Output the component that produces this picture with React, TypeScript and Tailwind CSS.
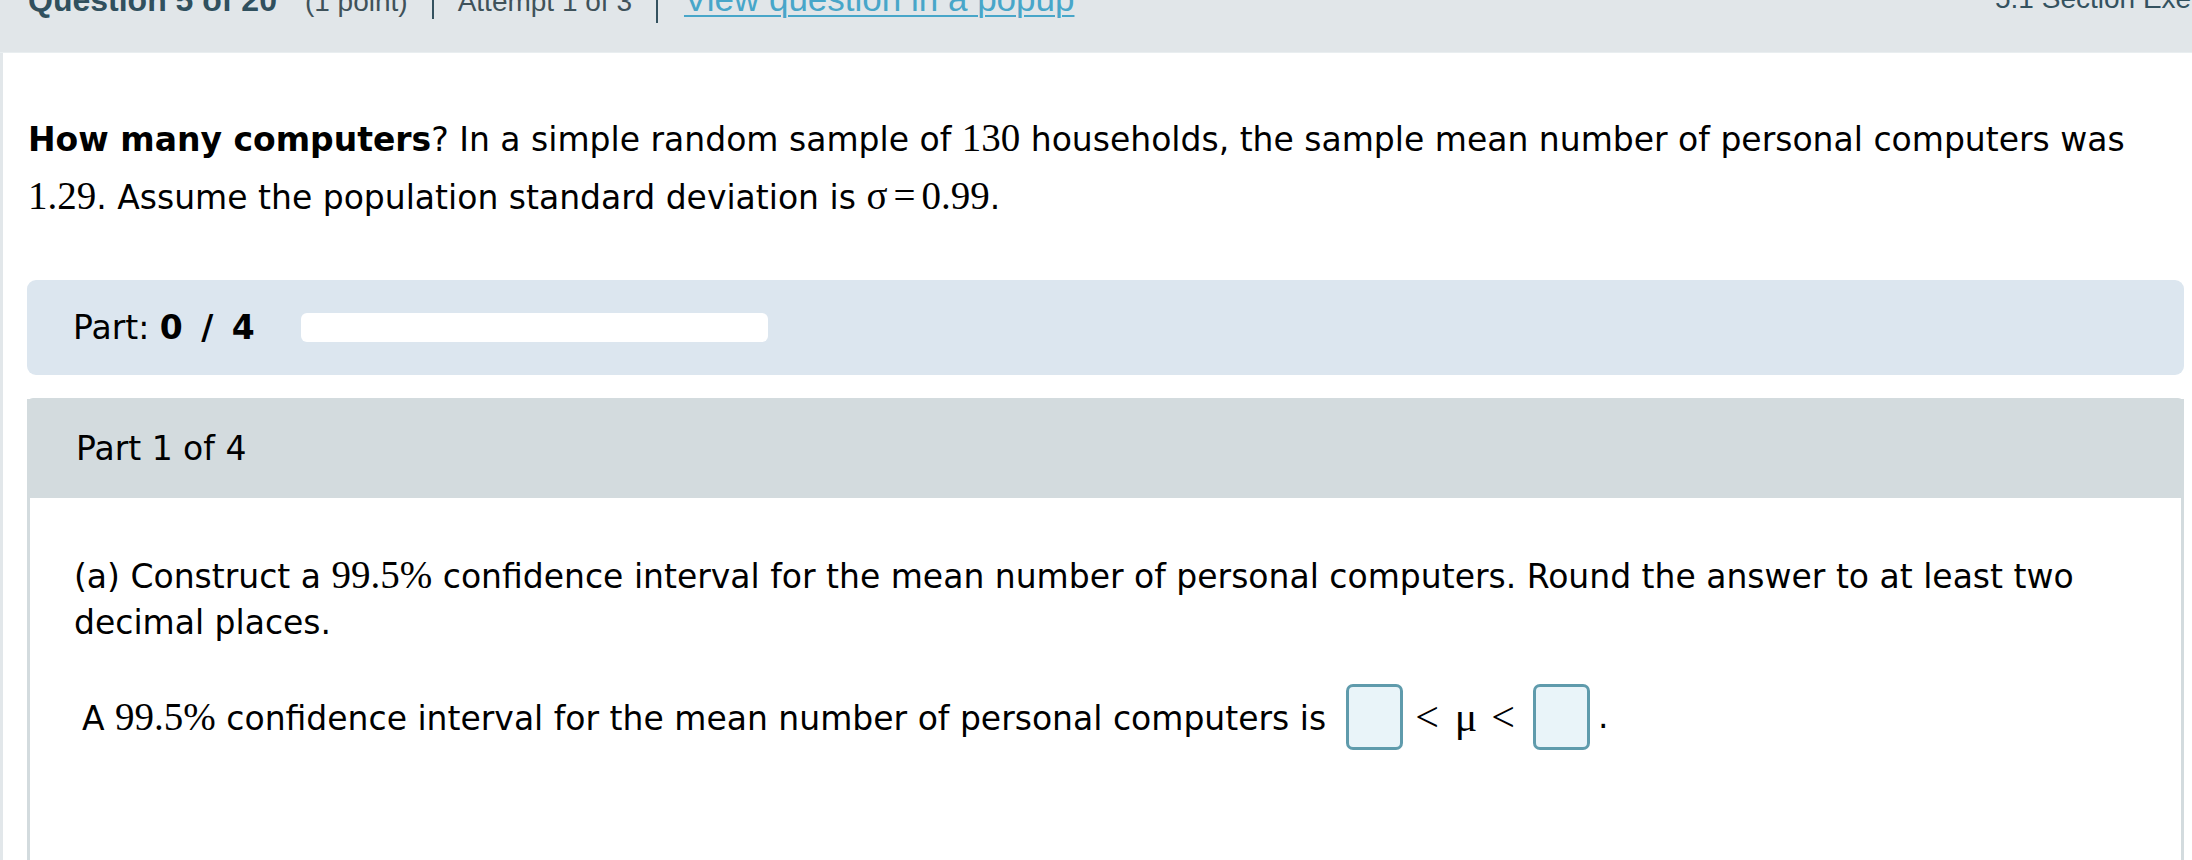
import React from 'react';

const serif = "font-['Liberation_Serif','Times_New_Roman',serif] text-[39px]";

function M({ children }: { children: React.ReactNode }) {
    return <span className={serif}>{children}</span>;
}

function AnswerBox() {
    return (
        <span className="inline-block w-[57px] h-[66px] rounded-[7px] border-[3px] border-[#5f9bac] bg-[#e9f4f9] shrink-0" />
    );
}

export default function App() {
    return (
        <div className="w-[2192px] h-[860px] overflow-hidden bg-white text-black font-['DejaVu_Sans',Verdana,sans-serif]">
            {/* top bar, scrolled so only the lower part shows */}
            <div className="h-[53px] bg-[#e1e6e9] border-b border-[#e9eef0] overflow-hidden flex pl-[28px] font-['Liberation_Sans',Arial,sans-serif]">
                <div className="flex items-baseline -mt-[17px] leading-[32px] whitespace-nowrap">
                    <span className="text-[32px] font-bold text-[#30505e]">Question 5 of 20</span>
                    <span className="text-[28px] text-[#3f525a] ml-[28px]">(1 point)</span>
                    <span className="self-start w-[2px] h-[36px] bg-[#34525f] ml-[24px]" />
                    <span className="text-[28px] text-[#3f525a] ml-[24px]">Attempt 1 of 3</span>
                    <span className="self-start w-[2px] h-[40px] bg-[#34525f] ml-[24px]" />
                    <span className="text-[35px] text-[#48a6c9] underline decoration-[2px] underline-offset-[4px] ml-[26px]">
                        View question in a popup
                    </span>
                </div>
                <div className="flex-1" />
                <div className="w-[197px] overflow-hidden flex items-baseline -mt-[17px] leading-[32px] whitespace-nowrap">
                    <span className="text-[28px] text-[#34525f]">5.1 Section Exercises</span>
                </div>
            </div>

            <div className="border-l-[3px] border-[#e2e7ea] h-full pl-[24px] pr-[8px]">
                <p className="pt-[57px] pl-[1px] pr-[12px] text-[33px] leading-[56px]">
                    <b>How many computers</b>? In a simple random sample of <M>130</M> households, the sample mean
                    number of personal computers was <M>1.29</M>. Assume the population standard deviation is{' '}
                    <M>σ</M>
                    <M>
                        <span className="ml-[6px] mr-[6px]">=</span>0.99
                    </M>
                    .
                </p>

                <div className="mt-[54px] h-[95px] rounded-[9px] bg-[#dce6ef] flex items-center pl-[46px]">
                    <span className="text-[33px]">
                        Part: <b className="[word-spacing:7px]">0 / 4</b>
                    </span>
                    <div className="ml-[46px] w-[467px] h-[29px] rounded-[6px] bg-white" />
                </div>

                <div className="mt-[23px] rounded-t-[6px] border-x-[3px] border-t-[1px] border-[#d3dbde] h-[500px]">
                    <div className="h-[99px] bg-[#d3dbde] flex items-center -mx-[3px] px-[3px]">
                        <span className="text-[33px] ml-[46px]">Part 1 of 4</span>
                    </div>
                    <div className="pl-[44px] pr-[40px]">
                        <p className="pt-[54px] text-[33px] leading-[46px]">
                            (a) Construct a <M>99.5%</M> confidence interval for the mean number of personal
                            computers. Round the answer to at least two decimal places.
                        </p>
                        <div className="mt-[38px] pl-[8px] flex items-center text-[33px] whitespace-nowrap">
                            <span>
                                A <M>99.5%</M> confidence interval for the mean number of personal computers is
                            </span>
                            <span className="ml-[20px] flex">
                                <AnswerBox />
                            </span>
                            <span className={`${serif} text-[42px] ml-[12px]`}>&lt;</span>
                            <span className={`${serif} text-[42px] ml-[16px]`}>μ</span>
                            <span className={`${serif} text-[42px] ml-[14px]`}>&lt;</span>
                            <span className="ml-[18px] flex">
                                <AnswerBox />
                            </span>
                            <span className="ml-[8px]">.</span>
                        </div>
                    </div>
                </div>
            </div>
        </div>
    );
}
